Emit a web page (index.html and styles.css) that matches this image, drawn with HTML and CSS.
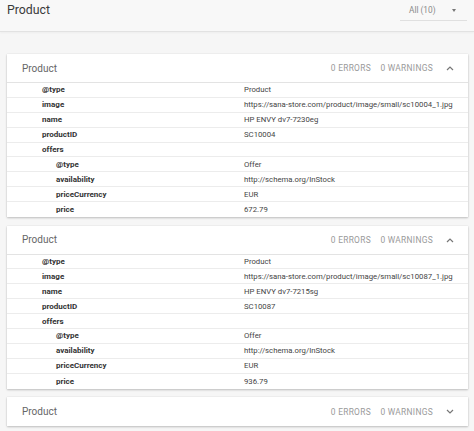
FILE: index.html
```html
<!DOCTYPE html>
<html>
<head>
<meta charset="utf-8">
<link rel="stylesheet" href="styles.css">
</head>
<body>
<div class="topbar">
  <div class="title">Product</div>
  <div class="filter"><span class="filter-text">All (10)</span><span class="caret"></span></div>
</div>
<div class="content">
  <div class="card">
    <div class="card-head">
      <span class="card-title">Product</span>
      <span class="counts"><span>0 ERRORS</span><span>0 WARNINGS</span></span>
      <svg class="chev" width="8" height="6" viewBox="0 0 8 6"><path d="M1 5 L4 2 L7 5" fill="none" stroke="#777" stroke-width="1.2"/></svg>
    </div>
    <div class="rows">
      <div class="row"><div class="key">@type</div><div class="val">Product</div></div>
      <div class="row"><div class="key">image</div><div class="val">https://sana-store.com/product/image/small/sc10004_1.jpg</div></div>
      <div class="row"><div class="key">name</div><div class="val">HP ENVY dv7-7230eg</div></div>
      <div class="row"><div class="key">productID</div><div class="val">SC10004</div></div>
      <div class="row"><div class="key">offers</div><div class="val"></div></div>
      <div class="row"><div class="key sub">@type</div><div class="val">Offer</div></div>
      <div class="row"><div class="key sub">availability</div><div class="val">http://schema.org/InStock</div></div>
      <div class="row"><div class="key sub">priceCurrency</div><div class="val">EUR</div></div>
      <div class="row"><div class="key sub">price</div><div class="val">672.79</div></div>
    </div>
  </div>
  <div class="card">
    <div class="card-head">
      <span class="card-title">Product</span>
      <span class="counts"><span>0 ERRORS</span><span>0 WARNINGS</span></span>
      <svg class="chev" width="8" height="6" viewBox="0 0 8 6"><path d="M1 5 L4 2 L7 5" fill="none" stroke="#777" stroke-width="1.2"/></svg>
    </div>
    <div class="rows">
      <div class="row"><div class="key">@type</div><div class="val">Product</div></div>
      <div class="row"><div class="key">image</div><div class="val">https://sana-store.com/product/image/small/sc10087_1.jpg</div></div>
      <div class="row"><div class="key">name</div><div class="val">HP ENVY dv7-7215sg</div></div>
      <div class="row"><div class="key">productID</div><div class="val">SC10087</div></div>
      <div class="row"><div class="key">offers</div><div class="val"></div></div>
      <div class="row"><div class="key sub">@type</div><div class="val">Offer</div></div>
      <div class="row"><div class="key sub">availability</div><div class="val">http://schema.org/InStock</div></div>
      <div class="row"><div class="key sub">priceCurrency</div><div class="val">EUR</div></div>
      <div class="row"><div class="key sub">price</div><div class="val">936.79</div></div>
    </div>
  </div>
  <div class="card">
    <div class="card-head collapsed">
      <span class="card-title">Product</span>
      <span class="counts"><span>0 ERRORS</span><span>0 WARNINGS</span></span>
      <svg class="chev" width="8" height="6" viewBox="0 0 8 6"><path d="M1 1 L4 4 L7 1" fill="none" stroke="#777" stroke-width="1.2"/></svg>
    </div>
  </div>
</div>
</body>
</html>
```

FILE: styles.css
```css
html, body {
  margin: 0;
  padding: 0;
}
body {
  background: #f6f6f6;
  font-family: Roboto, "Liberation Sans", Arial, sans-serif;
  color: #333;
  width: 474px;
  height: 431px;
  overflow: hidden;
}
.topbar {
  height: 31px;
  background: #f8f8f8;
  border-bottom: 1px solid #e2e2e2;
  box-shadow: 0 1px 2px rgba(0,0,0,0.04);
  display: flex;
  align-items: flex-start;
  justify-content: space-between;
  padding: 0 7px 0 7px;
  box-sizing: content-box;
}
.title {
  font-size: 12.3px;
  line-height: 13px;
  margin-top: 4px;
  color: #3a3a3a;
}
.filter {
  width: 67px;
  height: 21px;
  border-bottom: 1px solid #e0e0e0;
  display: flex;
  align-items: center;
  padding-left: 9px;
  box-sizing: border-box;
}
.filter-text {
  font-size: 8.3px;
  color: #8a8a8a;
}
.caret {
  width: 0;
  height: 0;
  border-left: 2.5px solid transparent;
  border-right: 2.5px solid transparent;
  border-top: 3px solid #777;
  margin-left: 16px;
}
.content {
  padding: 22px 6px 0 7px;
}
.card {
  background: #fff;
  box-shadow: 0 1px 2px rgba(0,0,0,0.22), 0 0 1px rgba(0,0,0,0.12);
  margin-bottom: 8.5px;
}
.card-head {
  height: 29px;
  box-sizing: border-box;
  border-bottom: 1px solid #e3e3e3;
  display: flex;
  align-items: center;
  padding: 0 14px 0 15px;
}
.card-head.collapsed {
  border-bottom: none;
}
.card-title {
  font-size: 10px;
  color: #666;
  flex: 1;
}
.counts {
  display: flex;
  gap: 9.5px;
  font-size: 8.4px;
  letter-spacing: 0.3px;
  color: #9a9a9a;
  margin-right: 13px;
}
.chev {
  display: block;
}
.row {
  display: grid;
  grid-template-columns: 237px 1fr;
  height: 14.9px;
  border-bottom: 1px solid #ececec;
  box-sizing: border-box;
  align-items: center;
  font-size: 8px;
}
.row:last-child {
  border-bottom: none;
}
.key {
  padding-left: 35px;
  font-weight: bold;
  color: #333;
}
.key.sub {
  padding-left: 49px;
}
.val {
  color: #444;
  font-size: 7.75px;
}
```
